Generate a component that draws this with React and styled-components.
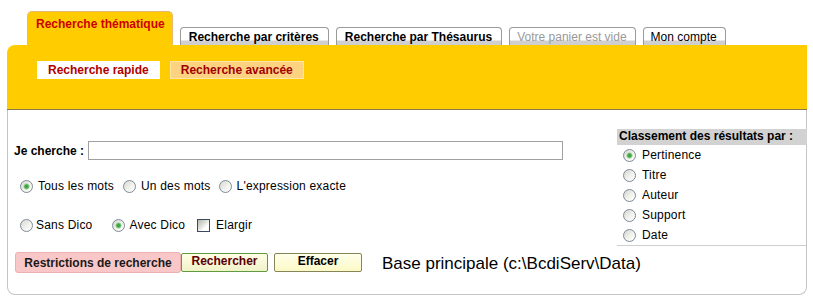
import React from "react";
import styled, { createGlobalStyle, css } from "styled-components";

const Global = createGlobalStyle`
  html, body { margin: 0; padding: 0; background: #fff; }
  body { font-family: "Liberation Sans", Arial, sans-serif; font-size: 12px; color: #000; }
  * { box-sizing: border-box; }
`;

const Page = styled.div`
  width: 813px;
  padding: 11px 0 0 7px;
`;

const Frame = styled.div`
  width: 800px;
`;

const TabBar = styled.div`
  display: flex;
  align-items: flex-end;
  gap: 7px;
  height: 34px;
  padding-left: 20px;
`;

const MainTab = styled.div`
  height: 34px;
  padding: 5px 7px 0 8px;
  background: #ffcc00;
  border: 1px solid #e6b870;
  border-bottom: none;
  border-radius: 5px 5px 0 0;
  color: #cc0000;
  font-weight: bold;
  font-size: 12px;
  line-height: 14px;
`;

const Tab = styled.div`
  height: 18px;
  padding: ${(p) => (p.$bold ? "0 9px 0 8px" : "0 8px 0 7px")};
  border: 1px solid #9a9a9a;
  border-bottom: none;
  border-radius: 4px 4px 0 0;
  background: linear-gradient(to bottom, #fff 0, #fff 12px, #cfcfcf 13px, #cfcfcf 100%);
  font-size: 12px;
  line-height: 18px;
  white-space: nowrap;
  color: ${(p) => (p.$muted ? "#9a9a9a" : "#000")};
  font-weight: ${(p) => (p.$bold ? "bold" : "normal")};
`;

const Band = styled.div`
  height: 65px;
  background: #ffcc00;
  border-top-left-radius: 8px;
  border-bottom: 1px solid #857a4c;
  display: flex;
  align-items: flex-start;
  gap: 10px;
  padding: 16px 0 0 30px;
`;

const SubTab = styled.div`
  height: 18px;
  padding: 0 10px;
  font-weight: bold;
  font-size: 12px;
  line-height: 17px;
  white-space: nowrap;
  ${(p) =>
    p.$active
      ? css`
          background: #fff;
          color: #b00000;
          border: 1px solid #fff;
        `
      : css`
          background: #fdd281;
          color: #a00000;
          border: 1px solid #ffe6a6;
        `}
`;

const Content = styled.div`
  height: 185px;
  border: 1px solid #c4c4c4;
  border-top: none;
  border-radius: 0 0 8px 8px;
  display: grid;
  grid-template-columns: 1fr 189px;
  grid-template-rows: 136px 1fr;
`;

const LeftCol = styled.div`
  padding: 31px 0 0 6px;
`;

const SearchRow = styled.div`
  display: flex;
  align-items: center;
  height: 19px;
`;

const Label = styled.label`
  font-weight: bold;
  font-size: 12px;
  margin-right: 4px;
`;

const TextInput = styled.input`
  width: 475px;
  height: 19px;
  border: 1px solid #a0a0a0;
  padding: 0 3px;
  font: 12px "Liberation Sans", Arial, sans-serif;
  outline: none;
`;

const OptionRow = styled.div`
  display: flex;
  align-items: center;
  height: 20px;
  margin-top: ${(p) => p.$top}px;
  padding-left: 6px;
`;

const Radio = styled.input.attrs({ type: "radio" })`
  appearance: none;
  -webkit-appearance: none;
  width: 13px;
  height: 13px;
  margin: 0 ${(p) => (p.$tight ? 3 : 5)}px 0 0;
  border: 1px solid #7d8a98;
  border-radius: 50%;
  background: linear-gradient(135deg, #d6d6ce 0%, #f2f2ee 55%, #fff 100%);
  flex: none;
  &:checked {
    background: radial-gradient(circle at 50% 50%, #3aa03a 0, #46a846 1.6px, #a6dba6 2.8px, transparent 3.4px),
      linear-gradient(135deg, #d6d6ce 0%, #f2f2ee 55%, #fff 100%);
  }
`;

const Check = styled.input.attrs({ type: "checkbox" })`
  appearance: none;
  -webkit-appearance: none;
  width: 13px;
  height: 13px;
  margin: 0 6px 0 0;
  border: 1px solid #3b4a5e;
  background: linear-gradient(135deg, #b8b8b0 0%, #dcdcd6 40%, #fff 70%);
  flex: none;
`;

const OptText = styled.span`
  font-size: 12px;
  letter-spacing: 0.2px;
  white-space: nowrap;
  margin-right: ${(p) => p.$gap || 0}px;
`;

const RightCol = styled.div`
  padding-top: 19px;
  border-bottom: 1px solid #cfcfcf;
`;

const SortHead = styled.div`
  height: 16px;
  background: #d2d2d2;
  font-weight: bold;
  font-size: 12px;
  line-height: 15px;
  padding-left: 2px;
  margin-right: -1px;
  white-space: nowrap;
`;

const SortItem = styled.div`
  display: flex;
  align-items: center;
  height: 20px;
  padding-left: 6px;
  & > input {
    margin-right: 6px;
  }
`;

const Actions = styled.div`
  grid-column: 1 / span 2;
  display: flex;
  align-items: flex-start;
  padding: 6px 0 0 7px;
`;

const Restrict = styled.div`
  height: 21px;
  width: 166px;
  background: #f9c7c7;
  border: 1px solid #ebb0b0;
  border-radius: 3px;
  font-weight: bold;
  font-size: 12px;
  line-height: 21px;
  text-align: center;
  color: #1a1a1a;
  white-space: nowrap;
`;

const Button = styled.button`
  height: 19px;
  width: ${(p) => p.$w}px;
  margin: 1px 0 0 ${(p) => p.$ml}px;
  border: 1px solid ${(p) => p.$border};
  border-radius: 2px;
  background: ${(p) => p.$bg};
  color: ${(p) => p.$color};
  font: bold 12px "Liberation Sans", Arial, sans-serif;
  padding: 0 0 2px;
  line-height: 15px;
  cursor: pointer;
`;

const Base = styled.span`
  margin: 2px 0 0 20px;
  font-size: 17px;
  line-height: 20px;
  white-space: nowrap;
  color: #000;
`;

export default function App() {
  const sorts = ["Pertinence", "Titre", "Auteur", "Support", "Date"];
  return (
    <Page>
      <Global />
      <Frame>
        <TabBar>
          <MainTab>Recherche thématique</MainTab>
          <Tab $bold>Recherche par critères</Tab>
          <Tab $bold>Recherche par Thésaurus</Tab>
          <Tab $muted>Votre panier est vide</Tab>
          <Tab>Mon compte</Tab>
        </TabBar>
        <Band>
          <SubTab $active>Recherche rapide</SubTab>
          <SubTab>Recherche avancée</SubTab>
        </Band>
        <Content>
          <LeftCol>
            <SearchRow>
              <Label>Je cherche :</Label>
              <TextInput type="text" />
            </SearchRow>
            <OptionRow $top={16}>
              <Radio name="mode" defaultChecked />
              <OptText $gap={9}>Tous les mots</OptText>
              <Radio name="mode" />
              <OptText $gap={8}>Un des mots</OptText>
              <Radio name="mode" />
              <OptText>L'expression exacte</OptText>
            </OptionRow>
            <OptionRow $top={19}>
              <Radio name="dico" $tight />
              <OptText $gap={19}>Sans Dico</OptText>
              <Radio name="dico" defaultChecked />
              <OptText $gap={12}>Avec Dico</OptText>
              <Check />
              <OptText>Elargir</OptText>
            </OptionRow>
          </LeftCol>
          <RightCol>
            <SortHead>Classement des résultats par :</SortHead>
            {sorts.map((s, i) => (
              <SortItem key={s}>
                <Radio name="sort" defaultChecked={i === 0} />
                <OptText>{s}</OptText>
              </SortItem>
            ))}
          </RightCol>
          <Actions>
            <Restrict>Restrictions de recherche</Restrict>
            <Button
              $w={87}
              $ml={0}
              $border="#5f9a3e"
              $bg="linear-gradient(to bottom, #ffffe6, #f0f2c8)"
              $color="#5a0000"
            >
              Rechercher
            </Button>
            <Button
              $w={88}
              $ml={6}
              $border="#84865a"
              $bg="linear-gradient(to bottom, #ffffea, #fcf9c6)"
              $color="#000"
            >
              Effacer
            </Button>
            <Base>Base principale (c:\BcdiServ\Data)</Base>
          </Actions>
        </Content>
      </Frame>
    </Page>
  );
}
